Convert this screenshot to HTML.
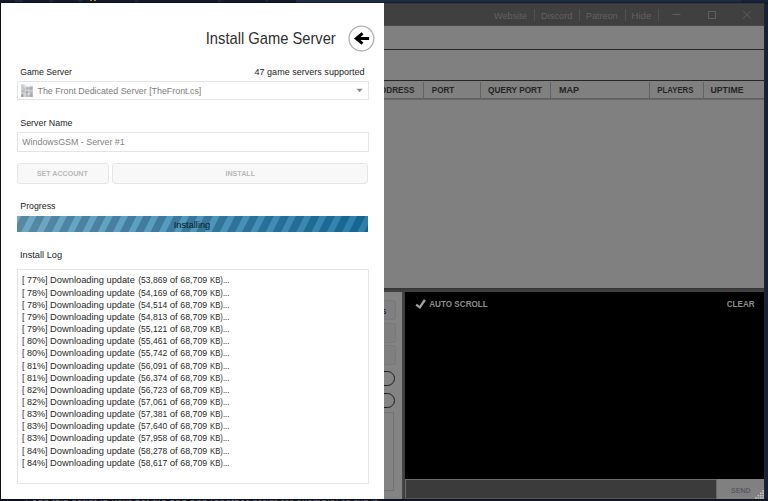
<!DOCTYPE html>
<html lang="en">
<head>
<meta charset="utf-8">
<title>WindowsGSM - Install Game Server</title>
<style>
*{margin:0;padding:0;box-sizing:border-box}
html,body{width:768px;height:501px;overflow:hidden}
body{background:#162336;font-family:"Liberation Sans",sans-serif;position:relative}
.a{position:absolute}
.t{position:absolute;left:0;top:0;white-space:nowrap;transform-origin:0 0;line-height:20px;height:20px;font-size:9.5px;color:#1e1e1e}
.b{font-weight:700}
/* desktop behind */
#dl{left:0;top:0;width:296px;height:4px;background:linear-gradient(#141d2c 0,#121a28 40%,#080c14 75%,#070a10 100%)}
#dr{left:296px;top:0;width:445px;height:4px;background:linear-gradient(#1f2e46 0,#1d2b42 40%,#10192a 75%,#0b111c 100%)}
#drr{left:741px;top:0;width:27px;height:4px;background:linear-gradient(#16243a 0,#142036 50%,#0c1422 100%)}
#db{left:0;top:499px;width:768px;height:2px;background:#0b1523;overflow:hidden;z-index:5}
#dl2{left:0;top:0;width:296px;height:2px;overflow:hidden}
#db:before{content:"";position:absolute;left:0;top:0;width:768px;height:1px;background:#0b1523;z-index:2;opacity:.75}
#under{position:absolute;left:25px;top:-3px;font-size:9.5px;line-height:11px;color:#76808c;white-space:nowrap;letter-spacing:.45px}
#dle{left:0;top:3px;width:1px;height:498px;background:#0a0f18}
#dre{left:764px;top:3px;width:1px;height:496px;background:#20252d}
/* main window (dimmed) */
#win{left:1px;top:3px;width:763px;height:496px;background:#808080}
#tbar{left:1px;top:3px;width:763px;height:23px;background:linear-gradient(#34363a 0,#34363a 1px,#404040 1px,#404040 22px,#484848 22px)}
.sep{position:absolute;top:9px;width:1px;height:12px;background:#515151}
.hl{position:absolute;left:1px;width:763px;height:1px;background:#262626}
.vs{position:absolute;top:82px;width:1px;height:16px;background:#626262}
#hdrb{left:1px;top:98px;width:763px;height:2px;background:linear-gradient(#5c5c5c,#6c6c6c)}
#band{left:384px;top:288px;width:380px;height:4px;background:linear-gradient(#363636,#404040 60%)}
#lpanel{left:384px;top:292px;width:18px;height:207px;background:#838383}
#vstrip{left:402px;top:292px;width:3px;height:207px;background:linear-gradient(90deg,#4a4a4a,#3a3a3a)}
#console{left:405px;top:292px;width:359px;height:187px;background:#000}
#cin{left:405px;top:479px;width:312px;height:20px;background:#3b3b3b;border:1px solid #6c6c6c;border-bottom-color:#555}
#send{left:717px;top:479px;width:47px;height:20px;background:#808080}
.lb{position:absolute;left:371px;width:24.5px;border:1px solid #797979;border-radius:2.5px;background:#7f7f7f}
.pill{position:absolute;left:369px;width:25.5px;height:15px;border:1.3px solid #1c1c1c;border-radius:7.5px}
#lbox{left:371px;top:412px;width:23px;height:79px;border:1px solid #727272}
/* flyout */
#fly{left:1px;top:3px;width:383px;height:496px;background:#fff}
.box{position:absolute;left:17px;width:352px;border:1px solid #e4e4e4;background:#fff}
.btn{position:absolute;top:163px;height:21px;border:1px solid #e6e6e6;border-radius:3px;background:#f8f8f8}
#pbar{left:17px;top:216px;width:351px;height:16px}
#log{left:0;top:0;width:384px;font-size:9.5px;line-height:12.167px;color:#2a2a2a}
.ln{position:relative;height:12.167px;white-space:nowrap}
.w{position:absolute;left:0;top:0;transform-origin:0 0;white-space:pre}
/*FIT*/
#title{font-size:16.6px;color:#303030;transform:translate(205.75px,28.55px) scaleX(0.8866)}
#lgs{font-size:9.5px;color:#1e1e1e;transform:translate(20.25px,61.51px) scaleX(0.9143)}
#cnt{font-size:9.5px;color:#1e1e1e;transform:translate(254.50px,61.51px) scaleX(0.9518)}
#combo{font-size:9.5px;color:#7d7d7d;transform:translate(37.50px,80.51px) scaleX(0.9316)}
#lsn{font-size:9.5px;color:#1e1e1e;transform:translate(20.25px,112.71px) scaleX(0.9330)}
#sn{font-size:9.5px;color:#828282;transform:translate(22.25px,131.71px) scaleX(0.9329)}
#b1{font-size:8px;color:#b9b9b9;transform:translate(36.75px,164.43px) scaleX(0.8870)}
#b2{font-size:8px;color:#b9b9b9;transform:translate(225.50px,164.43px) scaleX(0.8893)}
#lpr{font-size:9.5px;color:#1e1e1e;transform:translate(20.25px,195.51px) scaleX(0.9275)}
#inst{font-size:9.5px;color:#0a1820;transform:translate(173.75px,215.21px) scaleX(0.9740)}
#llog{font-size:9.5px;color:#1e1e1e;transform:translate(20.00px,244.51px) scaleX(0.9705)}
#web{font-size:9.5px;color:#606060;transform:translate(494.00px,5.71px) scaleX(0.9633)}
#dis{font-size:9.5px;color:#606060;transform:translate(541.00px,5.71px) scaleX(0.9760)}
#pat{font-size:9.5px;color:#606060;transform:translate(586.00px,5.71px) scaleX(0.9463)}
#hid{font-size:9.5px;color:#606060;transform:translate(631.50px,5.71px) scaleX(1.0133)}
#h0{font-size:8.6px;color:#252525;transform:translate(374.25px,80.12px) scaleX(0.9603)}
#h1{font-size:8.6px;color:#252525;transform:translate(431.75px,80.12px) scaleX(0.9453)}
#h2{font-size:8.6px;color:#252525;transform:translate(488.00px,80.12px) scaleX(0.9600)}
#h3{font-size:8.6px;color:#252525;transform:translate(559.00px,80.12px) scaleX(1.0489)}
#h4{font-size:8.6px;color:#252525;transform:translate(657.25px,80.12px) scaleX(0.9096)}
#h5{font-size:8.6px;color:#252525;transform:translate(710.50px,80.12px) scaleX(1.0156)}
#as{font-size:8.6px;color:#8e8e8e;transform:translate(429.25px,294.22px) scaleX(0.9447)}
#clr{font-size:8.6px;color:#8e8e8e;transform:translate(726.75px,294.22px) scaleX(0.9402)}
#snd{font-size:8px;color:#5c5c64;transform:translate(731.00px,480.93px) scaleX(0.8828)}
#lp{font-size:8px;color:#202636;transform:translate(366.25px,301.83px) scaleX(0.8855)}
#log{top:274.42px;font-size:9.5px;line-height:12.167px;color:#2a2a2a}
.c1{transform:translateX(22.00px) scaleX(0.9519)}
.c2{transform:translateX(50.00px) scaleX(0.9834)}
.c3{transform:translateX(106.50px) scaleX(0.9735)}
.c4{transform:translateX(138.25px) scaleX(0.8969)}
.c5{transform:translateX(169.75px) scaleX(1.0133)}
.c6{transform:translateX(180.25px) scaleX(0.9282)}
.c7{transform:translateX(210.00px) scaleX(0.8179)}
/*ENDFIT*/
</style>
</head>
<body>
<!-- desktop -->
<div class="a" id="dl"></div><div class="a" id="dr"></div><div class="a" id="drr"></div>
<div class="a" id="dl2"><i class="a" style="left:15px;top:0;width:8px;height:2px;background:#1a2940"></i><i class="a" style="left:50px;top:0;width:3px;height:2px;background:#1a2940"></i><i class="a" style="left:78px;top:0;width:4px;height:2px;background:#1a2940"></i><i class="a" style="left:90px;top:0;width:2px;height:1px;background:#a88020"></i><i class="a" style="left:93.5px;top:0;width:2px;height:1px;background:#b48a24"></i><i class="a" style="left:135px;top:0;width:3px;height:2px;background:#18263c"></i><i class="a" style="left:218px;top:0;width:3px;height:2px;background:#18263c"></i><i class="a" style="left:265px;top:0;width:3px;height:2px;background:#18263c"></i></div>
<div class="a" id="db"><span id="under">&#8226; add this script in your bat file and add (another script for example) to run it</span></div><div class="a" id="dle"></div>

<!-- main WindowsGSM window, dimmed by the flyout overlay -->
<div class="a" id="dre"></div>
<div class="a" id="win"></div>
<div class="a" id="tbar"></div>
<span class="t" id="web">Website</span><i class="sep" style="left:534px"></i>
<span class="t" id="dis">Discord</span><i class="sep" style="left:579px"></i>
<span class="t" id="pat">Patreon</span><i class="sep" style="left:625px"></i>
<span class="t" id="hid">Hide</span><i class="sep" style="left:658px"></i>
<svg class="a" id="wbtn" style="left:660px;top:3px" width="105" height="23" viewBox="0 0 105 23">
  <path d="M12.5 11.5h8" stroke="#5e5e5e" stroke-width="1" fill="none"/>
  <rect x="48.5" y="8.5" width="7" height="7" stroke="#5e5e5e" stroke-width="1" fill="none"/>
  <path d="M83.2 8l7.6 7.6M90.8 8l-7.6 7.6" stroke="#5e5e5e" stroke-width="1" fill="none"/>
</svg>
<i class="hl" style="top:49px"></i>
<i class="hl" style="top:80px"></i>
<span class="t b" id="h0">ADDRESS</span><i class="vs" style="left:423px"></i>
<span class="t b" id="h1">PORT</span><i class="vs" style="left:480px"></i>
<span class="t b" id="h2">QUERY PORT</span><i class="vs" style="left:550px"></i>
<span class="t b" id="h3">MAP</span><i class="vs" style="left:649px"></i>
<span class="t b" id="h4">PLAYERS</span><i class="vs" style="left:703px"></i>
<span class="t b" id="h5">UPTIME</span>
<div class="a" id="hdrb"></div>
<div class="a" id="band"></div>
<div class="a" id="lpanel"></div>
<i class="lb" style="top:300px;height:19.5px"></i>
<i class="lb" style="top:322.5px;height:20px"></i>
<i class="lb" style="top:345px;height:20px"></i>
<i class="pill" style="top:371px"></i>
<i class="pill" style="top:392.5px"></i>
<div class="a" id="lbox"></div>
<span class="t b" id="lp">LOGS</span>
<div class="a" id="vstrip"></div>
<div class="a" id="console"></div>
<svg class="a" style="left:414px;top:298px" width="14" height="12" viewBox="0 0 14 12"><path d="M2.1 6.6L5.8 9.4L10.9 1.8" stroke="#a0a0a0" stroke-width="2.4" fill="none" stroke-linejoin="miter"/></svg>
<span class="t b" id="as">AUTO SCROLL</span>
<span class="t b" id="clr">CLEAR</span>
<div class="a" id="cin"></div>
<div class="a" id="send"></div>
<span class="t b" id="snd">SEND</span>
<svg class="a" style="left:755px;top:489px" width="10" height="10" viewBox="0 0 10 10" fill="#c4c4c4">
  <rect x="7.4" y="1" width="1.6" height="1.6"/>
  <rect x="5" y="3.4" width="1.6" height="1.6"/><rect x="7.4" y="3.4" width="1.6" height="1.6"/>
  <rect x="2.6" y="5.8" width="1.6" height="1.6"/><rect x="5" y="5.8" width="1.6" height="1.6"/><rect x="7.4" y="5.8" width="1.6" height="1.6"/>
  <rect x=".2" y="8.2" width="1.6" height="1.6"/><rect x="2.6" y="8.2" width="1.6" height="1.6"/><rect x="5" y="8.2" width="1.6" height="1.6"/><rect x="7.4" y="8.2" width="1.6" height="1.6"/>
</svg>

<!-- Install Game Server flyout -->
<div class="a" id="fly"></div>
<span class="t" id="title">Install Game Server</span>
<svg class="a" style="left:347px;top:24px" width="30" height="30" viewBox="0 0 30 30">
  <circle cx="14.4" cy="14.6" r="12.4" fill="#fff" stroke="#b0b0b0" stroke-width="1.3"/>
  <path d="M22.1 14.5H9M15.5 9.4L9.3 14.5l6.2 5.1" stroke="#000" stroke-width="3" fill="none" stroke-linejoin="miter"/>
</svg>
<span class="t" id="lgs">Game Server</span>
<span class="t" id="cnt">47 game servers supported</span>
<div class="box" style="top:81px;height:19px"></div>
<svg class="a" style="left:21px;top:84px" width="12.3" height="13" viewBox="0 0 12 13" preserveAspectRatio="none"><defs><filter id="ib" x="0" y="0" width="1" height="1"><feGaussianBlur stdDeviation=".35"/></filter></defs><g filter="url(#ib)"><rect x="0" y="0" width="1.05" height="1.05" fill="#e0e2e5"/><rect x="1" y="0" width="1.05" height="1.05" fill="#d4d5d8"/><rect x="2" y="0" width="1.05" height="1.05" fill="#e0e2e5"/><rect x="3" y="0" width="1.05" height="1.05" fill="#e6e8eb"/><rect x="4" y="0" width="1.05" height="1.05" fill="#f3f4f7"/><rect x="5" y="0" width="1.05" height="1.05" fill="#f6f7fb"/><rect x="6" y="0" width="1.05" height="1.05" fill="#f6f7fb"/><rect x="7" y="0" width="1.05" height="1.05" fill="#f6f7fb"/><rect x="8" y="0" width="1.05" height="1.05" fill="#f6f7fb"/><rect x="9" y="0" width="1.05" height="1.05" fill="#f6f7fb"/><rect x="10" y="0" width="1.05" height="1.05" fill="#f6f7fb"/><rect x="11" y="0" width="1.05" height="1.05" fill="#f3f4f7"/><rect x="0" y="1" width="1.05" height="1.05" fill="#dadbdf"/><rect x="1" y="1" width="1.05" height="1.05" fill="#c7c9cc"/><rect x="2" y="1" width="1.05" height="1.05" fill="#dadbdf"/><rect x="3" y="1" width="1.05" height="1.05" fill="#e0e2e5"/><rect x="4" y="1" width="1.05" height="1.05" fill="#f0f1f4"/><rect x="5" y="1" width="1.05" height="1.05" fill="#f6f7fb"/><rect x="6" y="1" width="1.05" height="1.05" fill="#f6f7fb"/><rect x="7" y="1" width="1.05" height="1.05" fill="#f6f7fb"/><rect x="8" y="1" width="1.05" height="1.05" fill="#f3f4f7"/><rect x="9" y="1" width="1.05" height="1.05" fill="#edeef1"/><rect x="10" y="1" width="1.05" height="1.05" fill="#edeef1"/><rect x="11" y="1" width="1.05" height="1.05" fill="#f0f1f4"/><rect x="0" y="2" width="1.05" height="1.05" fill="#d7d8db"/><rect x="1" y="2" width="1.05" height="1.05" fill="#c1c2c6"/><rect x="2" y="2" width="1.05" height="1.05" fill="#d0d2d5"/><rect x="3" y="2" width="1.05" height="1.05" fill="#d4d5d8"/><rect x="4" y="2" width="1.05" height="1.05" fill="#e0e2e5"/><rect x="5" y="2" width="1.05" height="1.05" fill="#e6e8eb"/><rect x="6" y="2" width="1.05" height="1.05" fill="#e9ebee"/><rect x="7" y="2" width="1.05" height="1.05" fill="#e6e8eb"/><rect x="8" y="2" width="1.05" height="1.05" fill="#dadbdf"/><rect x="9" y="2" width="1.05" height="1.05" fill="#c7c9cc"/><rect x="10" y="2" width="1.05" height="1.05" fill="#c1c2c6"/><rect x="11" y="2" width="1.05" height="1.05" fill="#d4d5d8"/><rect x="0" y="3" width="1.05" height="1.05" fill="#d4d5d8"/><rect x="1" y="3" width="1.05" height="1.05" fill="#c7c9cc"/><rect x="2" y="3" width="1.05" height="1.05" fill="#c1c2c6"/><rect x="3" y="3" width="1.05" height="1.05" fill="#cdcfd2"/><rect x="4" y="3" width="1.05" height="1.05" fill="#d4d5d8"/><rect x="5" y="3" width="1.05" height="1.05" fill="#b4b6b9"/><rect x="6" y="3" width="1.05" height="1.05" fill="#aeb0b3"/><rect x="7" y="3" width="1.05" height="1.05" fill="#c1c2c6"/><rect x="8" y="3" width="1.05" height="1.05" fill="#aeb0b3"/><rect x="9" y="3" width="1.05" height="1.05" fill="#a2a3a6"/><rect x="10" y="3" width="1.05" height="1.05" fill="#9b9da0"/><rect x="11" y="3" width="1.05" height="1.05" fill="#b4b6b9"/><rect x="0" y="4" width="1.05" height="1.05" fill="#d4d5d8"/><rect x="1" y="4" width="1.05" height="1.05" fill="#cdcfd2"/><rect x="2" y="4" width="1.05" height="1.05" fill="#bbbcbf"/><rect x="3" y="4" width="1.05" height="1.05" fill="#c1c2c6"/><rect x="4" y="4" width="1.05" height="1.05" fill="#cdcfd2"/><rect x="5" y="4" width="1.05" height="1.05" fill="#a8a9ad"/><rect x="6" y="4" width="1.05" height="1.05" fill="#a2a3a6"/><rect x="7" y="4" width="1.05" height="1.05" fill="#bbbcbf"/><rect x="8" y="4" width="1.05" height="1.05" fill="#a8a9ad"/><rect x="9" y="4" width="1.05" height="1.05" fill="#9b9da0"/><rect x="10" y="4" width="1.05" height="1.05" fill="#989a9d"/><rect x="11" y="4" width="1.05" height="1.05" fill="#aeb0b3"/><rect x="0" y="5" width="1.05" height="1.05" fill="#d0d2d5"/><rect x="1" y="5" width="1.05" height="1.05" fill="#c7c9cc"/><rect x="2" y="5" width="1.05" height="1.05" fill="#c7c9cc"/><rect x="3" y="5" width="1.05" height="1.05" fill="#c1c2c6"/><rect x="4" y="5" width="1.05" height="1.05" fill="#c7c9cc"/><rect x="5" y="5" width="1.05" height="1.05" fill="#b4b6b9"/><rect x="6" y="5" width="1.05" height="1.05" fill="#aeb0b3"/><rect x="7" y="5" width="1.05" height="1.05" fill="#c1c2c6"/><rect x="8" y="5" width="1.05" height="1.05" fill="#b4b6b9"/><rect x="9" y="5" width="1.05" height="1.05" fill="#a8a9ad"/><rect x="10" y="5" width="1.05" height="1.05" fill="#a5a6a9"/><rect x="11" y="5" width="1.05" height="1.05" fill="#bbbcbf"/><rect x="0" y="6" width="1.05" height="1.05" fill="#c7c9cc"/><rect x="1" y="6" width="1.05" height="1.05" fill="#bbbcbf"/><rect x="2" y="6" width="1.05" height="1.05" fill="#c1c2c6"/><rect x="3" y="6" width="1.05" height="1.05" fill="#c7c9cc"/><rect x="4" y="6" width="1.05" height="1.05" fill="#cdcfd2"/><rect x="5" y="6" width="1.05" height="1.05" fill="#d4d5d8"/><rect x="6" y="6" width="1.05" height="1.05" fill="#cdcfd2"/><rect x="7" y="6" width="1.05" height="1.05" fill="#d4d5d8"/><rect x="8" y="6" width="1.05" height="1.05" fill="#cdcfd2"/><rect x="9" y="6" width="1.05" height="1.05" fill="#c7c9cc"/><rect x="10" y="6" width="1.05" height="1.05" fill="#c7c9cc"/><rect x="11" y="6" width="1.05" height="1.05" fill="#d4d5d8"/><rect x="0" y="7" width="1.05" height="1.05" fill="#c1c2c6"/><rect x="1" y="7" width="1.05" height="1.05" fill="#b4b6b9"/><rect x="2" y="7" width="1.05" height="1.05" fill="#bbbcbf"/><rect x="3" y="7" width="1.05" height="1.05" fill="#c1c2c6"/><rect x="4" y="7" width="1.05" height="1.05" fill="#bbbcbf"/><rect x="5" y="7" width="1.05" height="1.05" fill="#aeb0b3"/><rect x="6" y="7" width="1.05" height="1.05" fill="#a8a9ad"/><rect x="7" y="7" width="1.05" height="1.05" fill="#c1c2c6"/><rect x="8" y="7" width="1.05" height="1.05" fill="#bbbcbf"/><rect x="9" y="7" width="1.05" height="1.05" fill="#b4b6b9"/><rect x="10" y="7" width="1.05" height="1.05" fill="#aeb0b3"/><rect x="11" y="7" width="1.05" height="1.05" fill="#c1c2c6"/><rect x="0" y="8" width="1.05" height="1.05" fill="#cdcfd2"/><rect x="1" y="8" width="1.05" height="1.05" fill="#c7c9cc"/><rect x="2" y="8" width="1.05" height="1.05" fill="#c1c2c6"/><rect x="3" y="8" width="1.05" height="1.05" fill="#c7c9cc"/><rect x="4" y="8" width="1.05" height="1.05" fill="#c1c2c6"/><rect x="5" y="8" width="1.05" height="1.05" fill="#a2a3a6"/><rect x="6" y="8" width="1.05" height="1.05" fill="#9b9da0"/><rect x="7" y="8" width="1.05" height="1.05" fill="#b4b6b9"/><rect x="8" y="8" width="1.05" height="1.05" fill="#c1c2c6"/><rect x="9" y="8" width="1.05" height="1.05" fill="#aeb0b3"/><rect x="10" y="8" width="1.05" height="1.05" fill="#a8a9ad"/><rect x="11" y="8" width="1.05" height="1.05" fill="#bbbcbf"/><rect x="0" y="9" width="1.05" height="1.05" fill="#d4d5d8"/><rect x="1" y="9" width="1.05" height="1.05" fill="#cdcfd2"/><rect x="2" y="9" width="1.05" height="1.05" fill="#cdcfd2"/><rect x="3" y="9" width="1.05" height="1.05" fill="#d4d5d8"/><rect x="4" y="9" width="1.05" height="1.05" fill="#cdcfd2"/><rect x="5" y="9" width="1.05" height="1.05" fill="#aeb0b3"/><rect x="6" y="9" width="1.05" height="1.05" fill="#b4b6b9"/><rect x="7" y="9" width="1.05" height="1.05" fill="#edeef1"/><rect x="8" y="9" width="1.05" height="1.05" fill="#cdcfd2"/><rect x="9" y="9" width="1.05" height="1.05" fill="#a8a9ad"/><rect x="10" y="9" width="1.05" height="1.05" fill="#a2a3a6"/><rect x="11" y="9" width="1.05" height="1.05" fill="#b4b6b9"/><rect x="0" y="10" width="1.05" height="1.05" fill="#b4b6b9"/><rect x="1" y="10" width="1.05" height="1.05" fill="#a2a3a6"/><rect x="2" y="10" width="1.05" height="1.05" fill="#c1c2c6"/><rect x="3" y="10" width="1.05" height="1.05" fill="#d4d5d8"/><rect x="4" y="10" width="1.05" height="1.05" fill="#d4d5d8"/><rect x="5" y="10" width="1.05" height="1.05" fill="#bbbcbf"/><rect x="6" y="10" width="1.05" height="1.05" fill="#b4b6b9"/><rect x="7" y="10" width="1.05" height="1.05" fill="#dadbdf"/><rect x="8" y="10" width="1.05" height="1.05" fill="#bbbcbf"/><rect x="9" y="10" width="1.05" height="1.05" fill="#a2a3a6"/><rect x="10" y="10" width="1.05" height="1.05" fill="#9b9da0"/><rect x="11" y="10" width="1.05" height="1.05" fill="#aeb0b3"/><rect x="0" y="11" width="1.05" height="1.05" fill="#a8a9ad"/><rect x="1" y="11" width="1.05" height="1.05" fill="#95979a"/><rect x="2" y="11" width="1.05" height="1.05" fill="#bbbcbf"/><rect x="3" y="11" width="1.05" height="1.05" fill="#cdcfd2"/><rect x="4" y="11" width="1.05" height="1.05" fill="#cdcfd2"/><rect x="5" y="11" width="1.05" height="1.05" fill="#b4b6b9"/><rect x="6" y="11" width="1.05" height="1.05" fill="#aeb0b3"/><rect x="7" y="11" width="1.05" height="1.05" fill="#c1c2c6"/><rect x="8" y="11" width="1.05" height="1.05" fill="#aeb0b3"/><rect x="9" y="11" width="1.05" height="1.05" fill="#9b9da0"/><rect x="10" y="11" width="1.05" height="1.05" fill="#95979a"/><rect x="11" y="11" width="1.05" height="1.05" fill="#a8a9ad"/><rect x="0" y="12" width="1.05" height="1.05" fill="#aeb0b3"/><rect x="1" y="12" width="1.05" height="1.05" fill="#9b9da0"/><rect x="2" y="12" width="1.05" height="1.05" fill="#bbbcbf"/><rect x="3" y="12" width="1.05" height="1.05" fill="#c7c9cc"/><rect x="4" y="12" width="1.05" height="1.05" fill="#c7c9cc"/><rect x="5" y="12" width="1.05" height="1.05" fill="#b4b6b9"/><rect x="6" y="12" width="1.05" height="1.05" fill="#aeb0b3"/><rect x="7" y="12" width="1.05" height="1.05" fill="#bbbcbf"/><rect x="8" y="12" width="1.05" height="1.05" fill="#aeb0b3"/><rect x="9" y="12" width="1.05" height="1.05" fill="#9fa0a3"/><rect x="10" y="12" width="1.05" height="1.05" fill="#989a9d"/><rect x="11" y="12" width="1.05" height="1.05" fill="#abadb0"/></g></svg>
<span class="t" id="combo">The Front Dedicated Server [TheFront.cs]</span>
<svg class="a" style="left:356px;top:88px" width="8" height="5" viewBox="0 0 8 5"><path d="M.6.8h6l-3 3.4z" fill="#8a8a8a"/></svg>
<span class="t" id="lsn">Server Name</span>
<div class="box" style="top:132px;height:20px"></div>
<span class="t" id="sn">WindowsGSM - Server #1</span>
<div class="btn" style="left:17px;width:92px"></div>
<div class="btn" style="left:112px;width:256px"></div>
<span class="t b" id="b1">SET ACCOUNT</span>
<span class="t b" id="b2">INSTALL</span>
<span class="t" id="lpr">Progress</span>
<svg class="a" id="pbar" width="351" height="16" viewBox="0 0 351 16">
  <defs>
    <linearGradient id="pg" gradientUnits="userSpaceOnUse" x1="0" x2="351" y1="0" y2="0"><stop offset="0" stop-color="#5789a3"/><stop offset=".35" stop-color="#427d9e"/><stop offset="1" stop-color="#15658f"/></linearGradient>
    <linearGradient id="pl" gradientUnits="userSpaceOnUse" x1="0" x2="351" y1="0" y2="0"><stop offset="0" stop-color="#72a8c4"/><stop offset=".35" stop-color="#5b9fc2"/><stop offset="1" stop-color="#2c7fac"/></linearGradient>
  </defs>
  <rect width="351" height="16" fill="url(#pg)"/>
  <path d="M-2.77 0h6.9l-8.1 16h-6.9zM12.50 0h6.9l-8.1 16h-6.9zM27.77 0h6.9l-8.1 16h-6.9zM43.04 0h6.9l-8.1 16h-6.9zM58.31 0h6.9l-8.1 16h-6.9zM73.58 0h6.9l-8.1 16h-6.9zM88.85 0h6.9l-8.1 16h-6.9zM104.12 0h6.9l-8.1 16h-6.9zM119.39 0h6.9l-8.1 16h-6.9zM134.66 0h6.9l-8.1 16h-6.9zM149.93 0h6.9l-8.1 16h-6.9zM165.20 0h6.9l-8.1 16h-6.9zM180.47 0h6.9l-8.1 16h-6.9zM195.74 0h6.9l-8.1 16h-6.9zM211.01 0h6.9l-8.1 16h-6.9zM226.28 0h6.9l-8.1 16h-6.9zM241.55 0h6.9l-8.1 16h-6.9zM256.82 0h6.9l-8.1 16h-6.9zM272.09 0h6.9l-8.1 16h-6.9zM287.36 0h6.9l-8.1 16h-6.9zM302.63 0h6.9l-8.1 16h-6.9zM317.90 0h6.9l-8.1 16h-6.9zM333.17 0h6.9l-8.1 16h-6.9zM348.44 0h6.9l-8.1 16h-6.9zM363.71 0h6.9l-8.1 16h-6.9z" fill="url(#pl)"/>
</svg>
<span class="t" id="inst">Installing</span>
<span class="t" id="llog">Install Log</span>
<div class="box" style="top:269px;height:215px"></div>
<div class="a" id="log">
<div class="ln"><span class="w c1">[ 77%]</span> <span class="w c2">Downloading</span> <span class="w c3">update</span> <span class="w c4">(53,869</span> <span class="w c5">of</span> <span class="w c6">68,709</span> <span class="w c7">KB)...</span></div>
<div class="ln"><span class="w c1">[ 78%]</span> <span class="w c2">Downloading</span> <span class="w c3">update</span> <span class="w c4">(54,169</span> <span class="w c5">of</span> <span class="w c6">68,709</span> <span class="w c7">KB)...</span></div>
<div class="ln"><span class="w c1">[ 78%]</span> <span class="w c2">Downloading</span> <span class="w c3">update</span> <span class="w c4">(54,514</span> <span class="w c5">of</span> <span class="w c6">68,709</span> <span class="w c7">KB)...</span></div>
<div class="ln"><span class="w c1">[ 79%]</span> <span class="w c2">Downloading</span> <span class="w c3">update</span> <span class="w c4">(54,813</span> <span class="w c5">of</span> <span class="w c6">68,709</span> <span class="w c7">KB)...</span></div>
<div class="ln"><span class="w c1">[ 79%]</span> <span class="w c2">Downloading</span> <span class="w c3">update</span> <span class="w c4">(55,121</span> <span class="w c5">of</span> <span class="w c6">68,709</span> <span class="w c7">KB)...</span></div>
<div class="ln"><span class="w c1">[ 80%]</span> <span class="w c2">Downloading</span> <span class="w c3">update</span> <span class="w c4">(55,461</span> <span class="w c5">of</span> <span class="w c6">68,709</span> <span class="w c7">KB)...</span></div>
<div class="ln"><span class="w c1">[ 80%]</span> <span class="w c2">Downloading</span> <span class="w c3">update</span> <span class="w c4">(55,742</span> <span class="w c5">of</span> <span class="w c6">68,709</span> <span class="w c7">KB)...</span></div>
<div class="ln"><span class="w c1">[ 81%]</span> <span class="w c2">Downloading</span> <span class="w c3">update</span> <span class="w c4">(56,091</span> <span class="w c5">of</span> <span class="w c6">68,709</span> <span class="w c7">KB)...</span></div>
<div class="ln"><span class="w c1">[ 81%]</span> <span class="w c2">Downloading</span> <span class="w c3">update</span> <span class="w c4">(56,374</span> <span class="w c5">of</span> <span class="w c6">68,709</span> <span class="w c7">KB)...</span></div>
<div class="ln"><span class="w c1">[ 82%]</span> <span class="w c2">Downloading</span> <span class="w c3">update</span> <span class="w c4">(56,723</span> <span class="w c5">of</span> <span class="w c6">68,709</span> <span class="w c7">KB)...</span></div>
<div class="ln"><span class="w c1">[ 82%]</span> <span class="w c2">Downloading</span> <span class="w c3">update</span> <span class="w c4">(57,061</span> <span class="w c5">of</span> <span class="w c6">68,709</span> <span class="w c7">KB)...</span></div>
<div class="ln"><span class="w c1">[ 83%]</span> <span class="w c2">Downloading</span> <span class="w c3">update</span> <span class="w c4">(57,381</span> <span class="w c5">of</span> <span class="w c6">68,709</span> <span class="w c7">KB)...</span></div>
<div class="ln"><span class="w c1">[ 83%]</span> <span class="w c2">Downloading</span> <span class="w c3">update</span> <span class="w c4">(57,640</span> <span class="w c5">of</span> <span class="w c6">68,709</span> <span class="w c7">KB)...</span></div>
<div class="ln"><span class="w c1">[ 83%]</span> <span class="w c2">Downloading</span> <span class="w c3">update</span> <span class="w c4">(57,958</span> <span class="w c5">of</span> <span class="w c6">68,709</span> <span class="w c7">KB)...</span></div>
<div class="ln"><span class="w c1">[ 84%]</span> <span class="w c2">Downloading</span> <span class="w c3">update</span> <span class="w c4">(58,278</span> <span class="w c5">of</span> <span class="w c6">68,709</span> <span class="w c7">KB)...</span></div>
<div class="ln"><span class="w c1">[ 84%]</span> <span class="w c2">Downloading</span> <span class="w c3">update</span> <span class="w c4">(58,617</span> <span class="w c5">of</span> <span class="w c6">68,709</span> <span class="w c7">KB)...</span></div>
</div>
</body>
</html>
